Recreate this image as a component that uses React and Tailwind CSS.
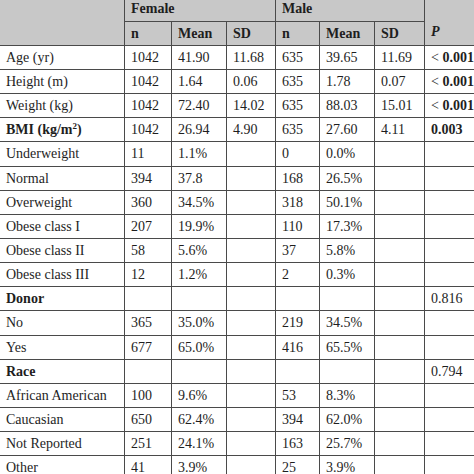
import React from "react";

const rows = [
  { label: "Age (yr)", f: ["1042", "41.90", "11.68"], m: ["635", "39.65", "11.69"], p: "lt" },
  { label: "Height (m)", f: ["1042", "1.64", "0.06"], m: ["635", "1.78", "0.07"], p: "lt" },
  { label: "Weight (kg)", f: ["1042", "72.40", "14.02"], m: ["635", "88.03", "15.01"], p: "lt" },
  { label: "BMI", bmi: true, f: ["1042", "26.94", "4.90"], m: ["635", "27.60", "4.11"], p: "0.003", pBold: true },
  { label: "Underweight", tall: true, f: ["11", "1.1%", ""], m: ["0", "0.0%", ""] },
  { label: "Normal", f: ["394", "37.8", ""], m: ["168", "26.5%", ""] },
  { label: "Overweight", f: ["360", "34.5%", ""], m: ["318", "50.1%", ""] },
  { label: "Obese class I", f: ["207", "19.9%", ""], m: ["110", "17.3%", ""] },
  { label: "Obese class II", f: ["58", "5.6%", ""], m: ["37", "5.8%", ""] },
  { label: "Obese class III", f: ["12", "1.2%", ""], m: ["2", "0.3%", ""] },
  { label: "Donor", bold: true, f: ["", "", ""], m: ["", "", ""], p: "0.816" },
  { label: "No", tall: true, f: ["365", "35.0%", ""], m: ["219", "34.5%", ""] },
  { label: "Yes", f: ["677", "65.0%", ""], m: ["416", "65.5%", ""] },
  { label: "Race", bold: true, f: ["", "", ""], m: ["", "", ""], p: "0.794" },
  { label: "African American", f: ["100", "9.6%", ""], m: ["53", "8.3%", ""] },
  { label: "Caucasian", f: ["650", "62.4%", ""], m: ["394", "62.0%", ""] },
  { label: "Not Reported", f: ["251", "24.1%", ""], m: ["163", "25.7%", ""] },
  { label: "Other", f: ["41", "3.9%", ""], m: ["25", "3.9%", ""] },
];

const base = "border border-[#4a4a4a] pl-[6px] pr-1 whitespace-nowrap";
const cell = `${base} align-middle`;

export default function App() {
  return (
    <div
      className="w-[474px] h-[474px] overflow-hidden bg-white text-[14px] leading-none text-[#1e1e1e]"
      style={{ fontFamily: '"Liberation Serif", "Times New Roman", serif' }}
    >
      <table className="table-fixed border-collapse w-[490px] -mt-px -ml-px">
        <colgroup>
          <col className="w-[125px]" />
          <col className="w-[47px]" />
          <col className="w-[55px]" />
          <col className="w-[49px]" />
          <col className="w-[44px]" />
          <col className="w-[55px]" />
          <col className="w-[50px]" />
          <col className="w-[65px]" />
        </colgroup>
        <thead className="bg-[#c8c8c8] font-bold">
          <tr className="h-[22px]">
            <th rowSpan={2} className={`${cell} border-t-0`}></th>
            <th colSpan={3} className={`${cell} text-left pb-[4px]`}>Female</th>
            <th colSpan={3} className={`${cell} text-left pb-[4px]`}>Male</th>
            <th rowSpan={2} className={`${base} text-left align-bottom pb-[6px] italic`}>P</th>
          </tr>
          <tr className="h-[24px]">
            <th className={`${cell} text-left`}>n</th>
            <th className={`${cell} text-left`}>Mean</th>
            <th className={`${cell} text-left`}>SD</th>
            <th className={`${cell} text-left`}>n</th>
            <th className={`${cell} text-left`}>Mean</th>
            <th className={`${cell} text-left`}>SD</th>
          </tr>
        </thead>
        <tbody>
          {rows.map((r) => (
            <tr key={r.label} className={r.tall ? "h-[25px]" : "h-[24px]"}>
              <td className={`${cell} pl-[2px] ${r.bold || r.bmi ? "font-bold" : ""}`}>
                {r.bmi ? (
                  <span>
                    BMI (kg/m<sup className="text-[9px]">2</sup>)
                  </span>
                ) : (
                  r.label
                )}
              </td>
              {r.f.map((v, i) => (
                <td key={"f" + i} className={cell}>{v}</td>
              ))}
              {r.m.map((v, i) => (
                <td key={"m" + i} className={cell}>{v}</td>
              ))}
              <td className={cell}>
                {r.p === "lt" ? (
                  <span>
                    &lt; <b>0.001</b>
                  </span>
                ) : (
                  <span className={r.pBold ? "font-bold" : ""}>{r.p || ""}</span>
                )}
              </td>
            </tr>
          ))}
        </tbody>
      </table>
    </div>
  );
}
